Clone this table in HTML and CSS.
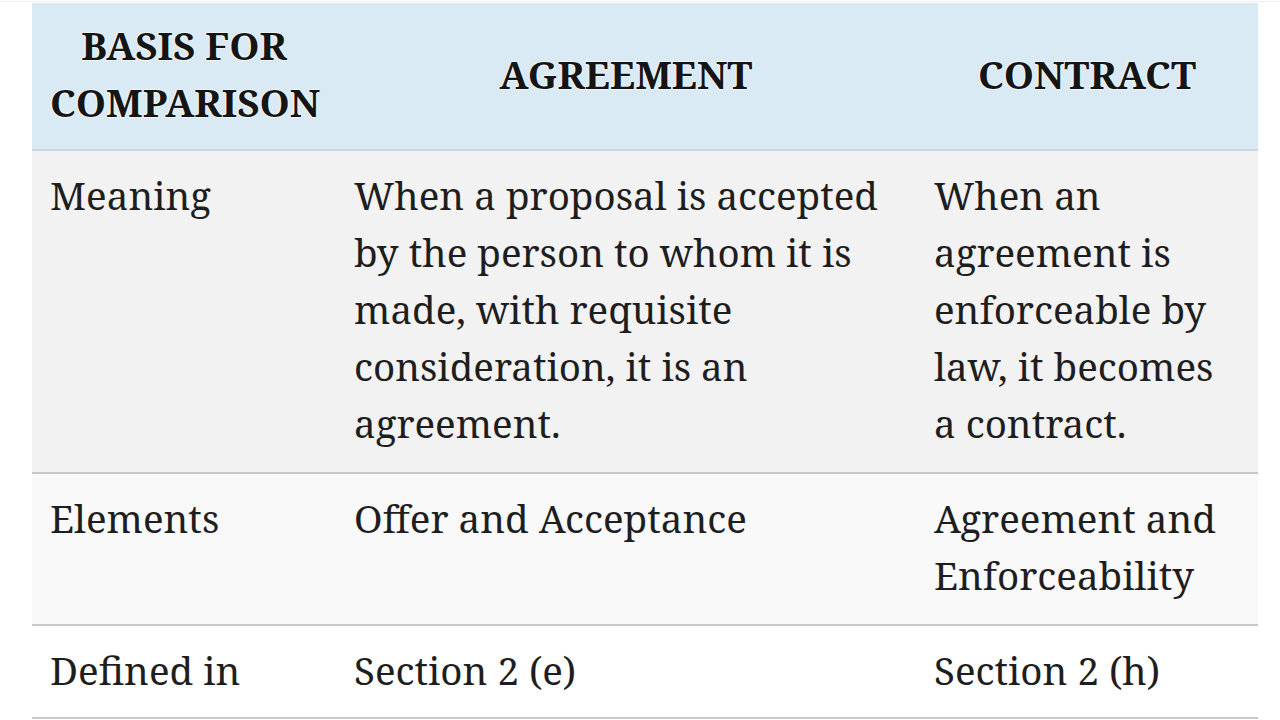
FILE: index.html
```html
<!DOCTYPE html>
<html>
<head>
<meta charset="utf-8">
<link rel="stylesheet" href="styles.css">
</head>
<body>
<div class="topline"></div>
<div class="wrap">
<table class="cmp">
<colgroup><col class="c1"><col class="c2"><col class="c3"></colgroup>
<thead>
<tr><th>BASIS FOR COMPARISON</th><th>AGREEMENT</th><th>CONTRACT</th></tr>
</thead>
<tbody>
<tr class="r1"><td>Meaning</td><td>When a proposal is accepted by the person to whom it is made, with requisite consideration, it is an agreement.</td><td>When an agreement is enforceable by law, it becomes a contract.</td></tr>
<tr class="r2"><td>Elements</td><td>Offer and Acceptance</td><td>Agreement and Enforceability</td></tr>
<tr class="r3"><td>Defined in</td><td>Section 2 (e)</td><td>Section 2 (h)</td></tr>
</tbody>
</table>
</div>
</body>
</html>
```
FILE: styles.css
```css
html, body { margin: 0; padding: 0; background: #fff; }
body { font-family: "Noto Serif", "DejaVu Serif", "Liberation Serif", serif; color: #1e1e1e; }
.topline { height: 1px; margin-top: 1px; background: #e6f1f7; }
.wrap { padding: 1px 22px 0 32px; }
.cmp { width: 1226px; border-collapse: collapse; table-layout: fixed; font-size: 38.5px; line-height: 57px; }
.c1 { width: 304px; }
.c2 { width: 580px; }
.c3 { width: 342px; }
.cmp th { background: #d9eaf5; font-weight: bold; text-align: center; padding: 14px 18px 18px; vertical-align: middle; text-shadow: 0 0 2px #fff, 0 0 2px #fff; color: #151515; border-bottom: 2px solid #c9d6de; }
.cmp td { text-align: left; vertical-align: top; padding: 16px 24px 20px 18px; border-bottom: 2px solid #c8c8c8; }
.r1 td { background: #f2f2f2; }
.r2 td { background: #f9f9f9; }
.r3 td { background: #fff; padding-bottom: 18px; }
```
